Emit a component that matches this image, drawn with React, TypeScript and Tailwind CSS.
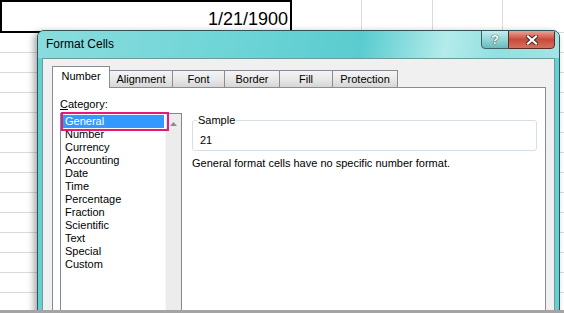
import React from 'react';

const categories = [
  'General',
  'Number',
  'Currency',
  'Accounting',
  'Date',
  'Time',
  'Percentage',
  'Fraction',
  'Scientific',
  'Text',
  'Special',
  'Custom',
];

const tabs = [
  { label: 'Number', w: 'w-[58px]' },
  { label: 'Alignment', w: 'w-[63px]' },
  { label: 'Font', w: 'w-[52px]' },
  { label: 'Border', w: 'w-[55px]' },
  { label: 'Fill', w: 'w-[53px]' },
  { label: 'Protection', w: 'w-[65px]' },
];

function GridCells() {
  return (
    <>
      <div className="w-[70px] border-r border-[#dadada]" />
      <div className="w-[71px] border-r border-[#dadada]" />
      <div className="w-[70px] border-r border-[#dadada]" />
      <div className="flex-1" />
    </>
  );
}

function Sheet() {
  const rows = Array.from({ length: 14 });
  return (
    <div className="flex flex-col">
      {/* Selected cell row */}
      <div className="flex h-[33px] shrink-0">
        <div className="w-[292px] h-[33px] border-2 border-black flex items-end justify-end pr-[2px] pb-[2px] text-[18px] leading-[20px] text-black">
          1/21/1900
        </div>
        <div className="flex flex-1 border-b border-[#dadada]">
          <GridCells />
        </div>
      </div>
      {rows.map((_, i) => (
        <div key={i} className="flex h-[20px] shrink-0 border-b border-[#dadada]">
          <div className="w-[292px]" />
          <GridCells />
        </div>
      ))}
    </div>
  );
}

function CaptionButtons() {
  return (
    <div className="flex -mt-px mr-[4px] h-[19px]">
      <div className="w-[28px] h-full flex items-center justify-center border border-[#3d6265] rounded-bl-[4px] bg-gradient-to-b from-[#c4eeee] via-[#94d6d7] to-[#6ab9bb]">
        <span className="text-white font-bold text-[13px] leading-none [text-shadow:0_0_1px_#2b3b3c,0_0_1px_#2b3b3c]">?</span>
      </div>
      <div className="w-[47px] h-full -ml-px flex items-center justify-center border border-[#5a2a24] rounded-br-[4px] bg-gradient-to-b from-[#e6a497] via-[#c9493a] to-[#d7705f]">
        <svg width="12" height="10" viewBox="0 0 12 10">
          <path d="M2 1.5 L10 8.5 M10 1.5 L2 8.5" stroke="#3b2a28" strokeWidth="4" strokeLinecap="square" />
          <path d="M2 1.5 L10 8.5 M10 1.5 L2 8.5" stroke="#ffffff" strokeWidth="2.2" strokeLinecap="square" />
        </svg>
      </div>
    </div>
  );
}

function CategoryList() {
  return (
    <div className="relative w-[122px] h-[220px] border border-[#828790] bg-white flex">
      <div className="w-[104px] pl-[2px] pr-[1px] pt-px flex flex-col">
        {categories.map((c, i) => (
          <div
            key={c}
            className={
              i === 0
                ? 'h-[13px] leading-[13px] px-[2px] bg-[#3399ff] text-white'
                : 'h-[13px] leading-[13px] px-[2px] text-black'
            }
          >
            {c}
          </div>
        ))}
      </div>
      <div className="w-[16px] bg-[#ececec] border-l border-[#f7f7f7] flex justify-center pt-[8px]">
        <svg width="7" height="4" viewBox="0 0 7 4">
          <path d="M0 4 L3.5 0 L7 4 Z" fill="#8c8c8c" />
        </svg>
      </div>
      {/* highlight annotation */}
      <div className="absolute left-0 top-[-2px] w-[108px] h-[19px] border-2 border-[#e6197b]" />
    </div>
  );
}

function FormatCellsDialog() {
  return (
    <div className="absolute left-[37px] top-[30px] w-[523px] h-[330px] rounded-t-[7px] border border-[#2f5356] bg-[#63d0d2] shadow-[-3px_2px_7px_rgba(0,0,0,0.35)] flex flex-col overflow-hidden">
      {/* Title bar */}
      <div className="h-[27px] shrink-0 flex justify-between items-start bg-[linear-gradient(100deg,#8adcde_0%,#70d5d7_35%,#5acccf_62%,#b4ebeb_78%,#92e0e1_88%,#a2e4e5_100%)]">
        <div className="pl-[8px] pt-[6px] text-[12px] leading-[14px] text-black">Format Cells</div>
        <CaptionButtons />
      </div>
      {/* Client area */}
      <div className="flex-1 mx-[4px] border border-[#6c9a9d] bg-[#f0f0f0] pt-[7px] pl-[9px] pr-[8px] flex flex-col">
        {/* Tabs */}
        <div className="flex items-end h-[21px] shrink-0">
          {tabs.map((t, i) =>
            i === 0 ? (
              <div
                key={t.label}
                className={`${t.w} relative z-10 h-[22px] -mb-px bg-white border-t border-l border-r border-[#898c95] flex items-center justify-center pb-[2px]`}
              >
                {t.label}
              </div>
            ) : (
              <div
                key={t.label}
                className={`${t.w} h-[17px] border-t border-r border-[#898c95] bg-gradient-to-b from-[#f4f4f4] via-[#e9e9e9] to-[#d6d6d6] flex items-center justify-center`}
              >
                {t.label}
              </div>
            )
          )}
        </div>
        {/* Tab page */}
        <div className="flex-1 border border-[#898c95] bg-white flex items-start gap-[10px] pl-[7px] pr-[8px]">
          <div className="pt-[10px] flex flex-col gap-[2px]">
            <div className="h-[13px] leading-[13px] text-black">
              <span className="underline">C</span>ategory:
            </div>
            <CategoryList />
          </div>
          <div className="flex-1 pt-[26px] flex flex-col">
            <fieldset className="border border-[#d5dfe5] rounded-[3px] pl-[7px] pb-[1px] h-[37px]">
              <legend className="-ml-[3px] px-[1px] h-[13px] leading-[13px] text-black">Sample</legend>
              <div className="pt-[7px] h-[13px] leading-[13px] text-black">21</div>
            </fieldset>
            <div className="mt-[6px] h-[13px] leading-[13px] text-black">
              General format cells have no specific number format.
            </div>
          </div>
        </div>
      </div>
    </div>
  );
}

export default function App() {
  return (
    <div className="w-[564px] h-[313px] bg-white flex flex-col font-['Liberation_Sans',Arial,sans-serif] text-[11px]">
      <div className="relative h-[310px] shrink-0 overflow-hidden">
        <Sheet />
        <FormatCellsDialog />
      </div>
      <div className="h-[3px] shrink-0 bg-[#a4a4a4]" />
    </div>
  );
}
